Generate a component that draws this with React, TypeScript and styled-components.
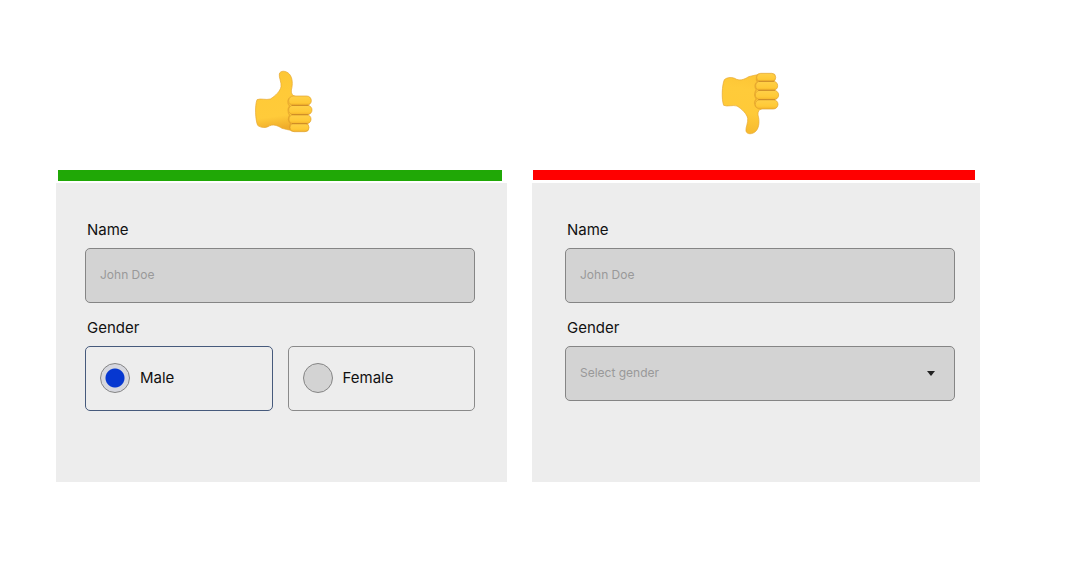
import React, { useId } from "react";
import styled, { createGlobalStyle } from "styled-components";

const GlobalStyle = createGlobalStyle`
  *, *::before, *::after { box-sizing: border-box; }
  body {
    margin: 0;
    background: #fff;
    color: #111;
    font-family: Inter, "Liberation Sans", sans-serif;
  }
`;

const Page = styled.main`
  display: grid;
  grid-template-columns: 451fr 448fr;
  column-gap: 25px;
  padding: 60px 100px 60px 56px;
`;

const Example = styled.section`
  display: flex;
  flex-direction: column;
  min-width: 0;
`;

const Verdict = styled.div<{ $inset: string }>`
  display: flex;
  justify-content: center;
  height: 110px;
  padding: ${(p) => p.$inset};
`;

const BarSlot = styled.div<{ $inset: string }>`
  height: 13px;
  padding: ${(p) => p.$inset};
`;

const Bar = styled.div<{ $color: string; $height: number }>`
  height: ${(p) => p.$height}px;
  background: ${(p) => p.$color};
`;

const Panel = styled.form<{ $left: number; $right: number }>`
  display: flex;
  flex-direction: column;
  gap: 15px;
  min-height: 299px;
  padding: 37px ${(p) => p.$right}px 37px ${(p) => p.$left}px;
  background: #ededed;
`;

const Field = styled.div`
  display: flex;
  flex-direction: column;
  gap: 8px;
`;

const Label = styled.label`
  padding-left: 2px;
  font-size: 15px;
  line-height: 20px;
`;

const Group = styled.fieldset`
  margin: 0;
  padding: 0;
  border: 0;
  min-width: 0;
`;

const Legend = styled.legend`
  padding: 0 0 8px 2px;
  font-size: 15px;
  line-height: 20px;
`;

const TextInput = styled.input`
  width: 100%;
  height: 55px;
  padding: 0 14px 2px;
  border: 1px solid #858585;
  border-radius: 5px;
  background: #d3d3d3;
  color: #111;
  font: 12px Inter, "Liberation Sans", sans-serif;
  outline: none;
  &::placeholder { color: #999; opacity: 1; }
`;

const SelectBox = styled.div`
  display: grid;
  align-items: center;
  & > * { grid-area: 1 / 1; }
`;

const Select = styled.select`
  appearance: none;
  width: 100%;
  height: 55px;
  padding: 0 40px 2px 14px;
  border: 1px solid #858585;
  border-radius: 5px;
  background: #d3d3d3;
  color: #999;
  font: 12px Inter, "Liberation Sans", sans-serif;
  outline: none;
`;

const Caret = styled.svg`
  justify-self: end;
  margin-right: 20px;
  pointer-events: none;
`;

const Options = styled.div`
  display: grid;
  grid-template-columns: 1fr 1fr;
  gap: 15px;
`;

const Option = styled.label`
  display: flex;
  align-items: center;
  gap: 10px;
  height: 65px;
  padding: 0 14px 2px;
  border: 1px solid #8a8a8a;
  border-radius: 5px;
  font-size: 15px;
  line-height: 20px;
  &:has(input:checked) { border-color: #465a7c; }
`;

const Radio = styled.input`
  appearance: none;
  flex: none;
  width: 30px;
  height: 30px;
  margin: 0;
  border: 1px solid #858585;
  border-radius: 50%;
  background: #d3d3d3;
  &:checked {
    background: radial-gradient(circle, #0637d0 0 9px, #d6d7de 10px);
  }
`;

function Thumb({ down = false }: { down?: boolean }) {
  const id = useId().replace(/[^a-zA-Z0-9]/g, "");
  const skin = `skin${id}`;
  const finger = `finger${id}`;
  return (
    <svg
      width="90"
      height="85"
      viewBox="0 0 270 255"
      role="img"
      aria-label={down ? "Thumbs down" : "Thumbs up"}
    >
      <defs>
        <linearGradient id={skin} x1="0" y1="0" x2="0.1" y2="1">
          <stop offset="0" stopColor={down ? "#f5b62c" : "#fcc634"} />
          <stop offset="0.4" stopColor="#ffca38" />
          <stop offset="0.8" stopColor="#ffcb3a" />
          <stop offset="1" stopColor={down ? "#fdc636" : "#f0ad2b"} />
        </linearGradient>
        <linearGradient id={finger} x1="0" y1={down ? 1 : 0} x2="0" y2={down ? 0 : 1}>
          <stop offset="0" stopColor="#ffd048" />
          <stop offset="0.7" stopColor="#ffc936" />
          <stop offset="1" stopColor="#f3b22b" />
        </linearGradient>
      </defs>
      <g transform={down ? "translate(5 255) scale(1 -1)" : undefined}>
        <path
          d="M51 119C62 114 78 121 91 117C106 108 121 93 123 80C125 67 116 52 118 42C120 31 138 31 148 42C158 53 159 73 154 90C153 100 157 107 166 109L178 116V207C162 216 144 209 126 205C112 196 98 191 84 200C72 205 60 202 53 196C46 180 44 137 51 119Z"
          fill={`url(#${skin})`}
          stroke="#e6a62e"
          strokeWidth="2"
          strokeLinejoin="round"
        />
        <path
          d="M151 112C142 120 142 130 149 138C143 146 144 158 149 166C143 174 144 184 152 190C147 199 149 207 157 213"
          fill="none"
          stroke="#dd9a28"
          strokeWidth="4"
          opacity="0.6"
        />
        <g fill={`url(#${finger})`} stroke="#e0a02e" strokeWidth="2">
          <rect x="150" y="190" width="57" height="25" rx="12" />
          <rect x="147" y="164" width="66" height="27" rx="13" />
          <rect x="146" y="136" width="70" height="28" rx="14" />
          <rect x="146" y="108" width="68" height="28" rx="14" />
        </g>
        <g fill="none" stroke="#bd7a22" strokeWidth="3" strokeLinecap="round" opacity="0.65">
          <path d="M156 136H204" />
          <path d="M156 164H204" />
          <path d="M157 191H201" />
        </g>
      </g>
    </svg>
  );
}

export default function App() {
  return (
    <>
      <GlobalStyle />
      <Page>
        <Example>
          <Verdict $inset="0 0 0 7px">
            <Thumb />
          </Verdict>
          <BarSlot $inset="0 5px 0 2px">
            <Bar $color="#20a806" $height={11} />
          </BarSlot>
          <Panel $left={29} $right={32}>
            <Field>
              <Label htmlFor="name-radio">Name</Label>
              <TextInput id="name-radio" placeholder="John Doe" />
            </Field>
            <Group>
              <Legend>Gender</Legend>
              <Options>
                <Option>
                  <Radio type="radio" name="gender" value="male" defaultChecked />
                  Male
                </Option>
                <Option>
                  <Radio type="radio" name="gender" value="female" />
                  Female
                </Option>
              </Options>
            </Group>
          </Panel>
        </Example>
        <Example>
          <Verdict $inset="0 12px 0 0">
            <Thumb down />
          </Verdict>
          <BarSlot $inset="0 5px 0 1px">
            <Bar $color="#ff0000" $height={10} />
          </BarSlot>
          <Panel $left={33} $right={25}>
            <Field>
              <Label htmlFor="name-select">Name</Label>
              <TextInput id="name-select" placeholder="John Doe" />
            </Field>
            <Field>
              <Label htmlFor="gender-select">Gender</Label>
              <SelectBox>
                <Select id="gender-select" defaultValue="">
                  <option value="">Select gender</option>
                  <option value="male">Male</option>
                  <option value="female">Female</option>
                </Select>
                <Caret width="8" height="5" viewBox="0 0 8 5" aria-hidden="true">
                  <path d="M0 0H8L4 5Z" fill="#222" />
                </Caret>
              </SelectBox>
            </Field>
          </Panel>
        </Example>
      </Page>
    </>
  );
}
